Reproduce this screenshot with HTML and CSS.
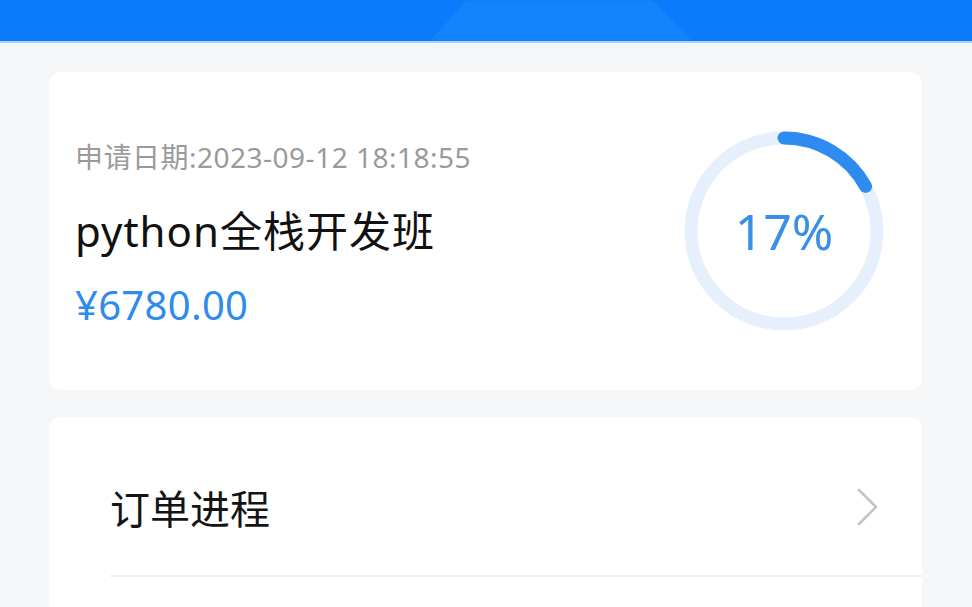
FILE: index.html
```html
<!DOCTYPE html>
<html lang="zh-CN">
<head>
<meta charset="utf-8">
<title>订单详情</title>
<link rel="stylesheet" href="styles.css">
</head>
<body>
<header class="topbar"></header>
<main class="content">
  <section class="card summary">
    <div class="info">
      <div class="date">申请日期:2023-09-12 18:18:55</div>
      <div class="title">python全栈开发班</div>
      <div class="price">¥6780.00</div>
    </div>
    <div class="ring">
      <svg width="200" height="200" viewBox="0 0 200 200">
        <circle cx="100" cy="100" r="93" fill="none" stroke="#e6f0fc" stroke-width="13"/>
        <circle cx="100" cy="100" r="93" fill="none" stroke="#2e8cf0" stroke-width="13" stroke-linecap="round" stroke-dasharray="99.3 600" transform="rotate(-90 100 100)"/>
      </svg>
      <span class="pct">17%</span>
    </div>
  </section>
  <section class="card list">
    <div class="row">
      <span class="row-label">订单进程</span>
      <svg class="chev" width="24" height="38" viewBox="0 0 24 38"><polyline points="3,2 20,19 3,36" fill="none" stroke="#c4c4c4" stroke-width="2.6" stroke-linecap="round" stroke-linejoin="round"/></svg>
    </div>
    <div class="divider"></div>
    <div class="spacer"></div>
  </section>
</main>
</body>
</html>
```
FILE: styles.css
```css
html, body {
  margin: 0;
  padding: 0;
}
body {
  background: #f5f6f7;
  font-family: "Noto Sans", "Noto Sans CJK SC", sans-serif;
  width: 972px;
  height: 607px;
  overflow: hidden;
}
.topbar {
  position: relative;
  height: 41px;
  background: #0a7bfb;
  border-bottom: 2px solid #9ad6ff;
  overflow: hidden;
}
.topbar::before {
  content: "";
  position: absolute;
  left: 430px;
  top: 0;
  width: 262px;
  height: 41px;
  background: #1483fc;
  clip-path: polygon(14% 0, 85% 0, 100% 100%, 0 100%);
  filter: blur(1.5px);
}
.content {
  padding: 29px 50px 0 49px;
  display: flex;
  flex-direction: column;
  gap: 27px;
}
.card {
  background: #ffffff;
  border-radius: 12px;
}
.summary {
  height: 318px;
  display: flex;
  align-items: center;
  justify-content: space-between;
  padding: 0 38px 0 26px;
  box-sizing: border-box;
}
.info {
  display: flex;
  flex-direction: column;
  gap: 34px;
}
.date {
  font-size: 28px;
  line-height: 40px;
  letter-spacing: 0.5px;
  color: #9a9a9a;
}
.title {
  font-size: 42px;
  line-height: 40px;
  letter-spacing: 1px;
  color: #111111;
}
.price {
  font-size: 40px;
  line-height: 40px;
  letter-spacing: 0.3px;
  color: #2f8cec;
}
.ring {
  position: relative;
  width: 200px;
  height: 200px;
}
.ring svg {
  display: block;
}
.pct {
  position: absolute;
  inset: 0;
  display: flex;
  align-items: center;
  justify-content: center;
  font-size: 50px;
  color: #3a8fe8;
}
.list {
  height: 260px;
}
.row {
  height: 158px;
  box-sizing: border-box;
  padding: 22px 42px 0 61px;
  display: flex;
  align-items: center;
  justify-content: space-between;
}
.row-label {
  font-size: 40px;
  color: #141414;
}
.chev {
  display: block;
}
.divider {
  height: 2px;
  background: #f0f0f0;
  margin-left: 61px;
}
.spacer {
  height: 100px;
}
```
